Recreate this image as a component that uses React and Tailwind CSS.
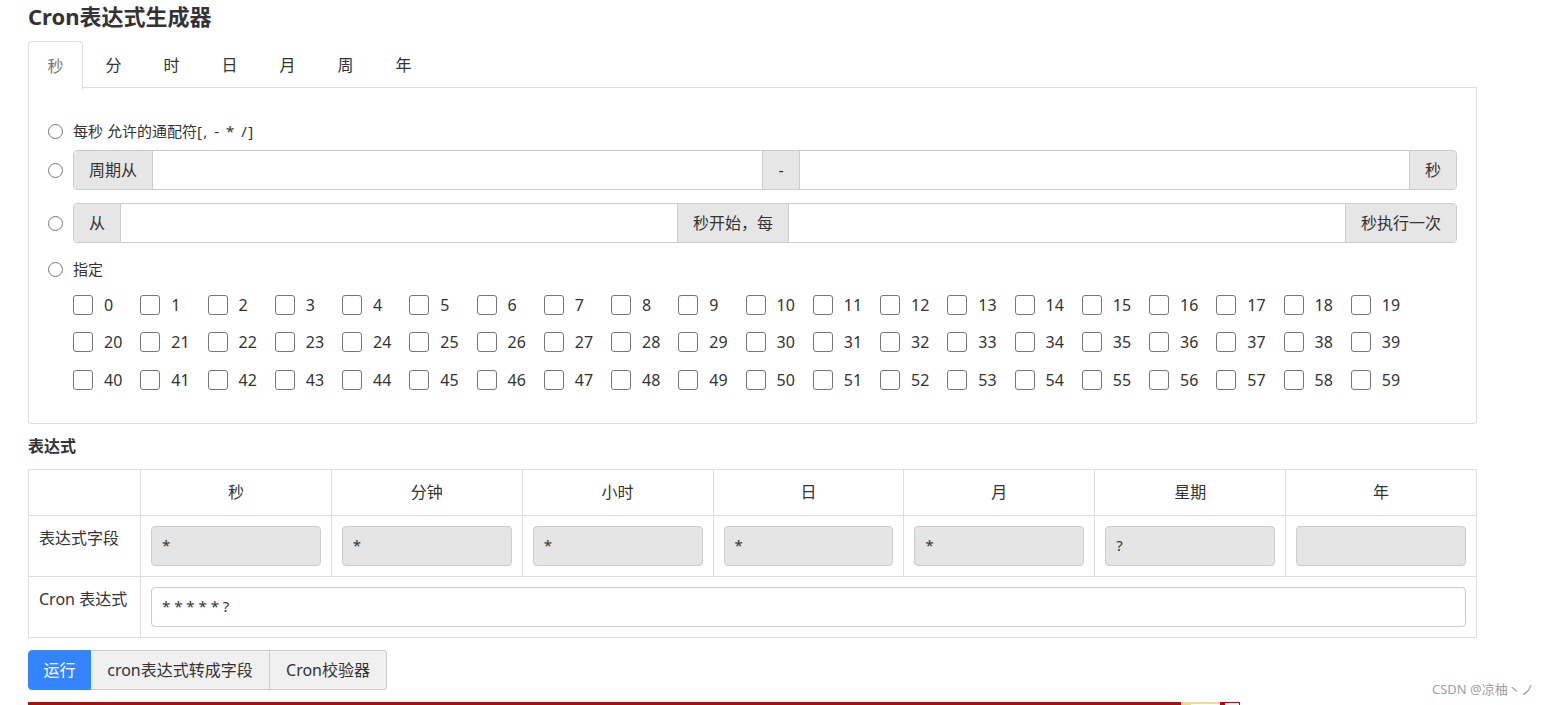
import React from "react";

const font = { fontFamily: '"Noto Sans", "Noto Sans CJK SC", sans-serif' };

const tabs = ["秒", "分", "时", "日", "月", "周", "年"];
const fields = [
  { label: "秒", value: "*" },
  { label: "分钟", value: "*" },
  { label: "小时", value: "*" },
  { label: "日", value: "*" },
  { label: "月", value: "*" },
  { label: "星期", value: "?" },
  { label: "年", value: "" },
];

const Radio = () => (
  <span className="mr-[10px] inline-block h-[15px] w-[15px] shrink-0 rounded-full border border-[#767676] bg-white" />
);

const Addon = ({ children, className = "" }) => (
  <span
    className={`flex h-full items-center border-[#ccc] bg-[#e6e6e6] px-[15px] text-base text-[#333] ${className}`}
  >
    {children}
  </span>
);

const Field = () => <span className="h-full flex-1 bg-white" />;

const App = () => {
  return (
    <div className="relative min-h-screen overflow-hidden bg-white text-[#333]" style={font}>
      <div className="ml-[28px] w-[1449px]">
        <h1 className="h-[32px] text-[22px] leading-[32px] font-bold">Cron表达式生成器</h1>

        {/* tabs */}
        <div className="mt-[9px] flex h-[47px] border-b border-[#ddd]">
          {tabs.map((t, i) => (
            <div
              key={t}
              className={`mr-[3px] flex h-[47px] w-[55px] items-center justify-center text-base ${
                i === 0
                  ? "-mb-px h-[48px] rounded-t-[4px] border border-b-0 border-[#ddd] bg-white text-[#777]"
                  : "text-[#333]"
              }`}
            >
              {t}
            </div>
          ))}
        </div>

        {/* panel */}
        <div className="rounded-b-[4px] border border-t-0 border-[#ddd] pt-[33px] pr-[19px] pb-[24px] pl-[19px]">
          <div className="flex h-[20px] items-center text-[15px]">
            <Radio />
            <span>
              每秒 允许的通配符<span className="tracking-[1.5px]">[, - * /]</span>
            </span>
          </div>

          <div className="mt-[9px] flex h-[40px] items-center">
            <Radio />
            <div className="flex h-[40px] flex-1 overflow-hidden rounded-[4px] border border-[#ccc]">
              <Addon className="border-r">周期从</Addon>
              <Field />
              <Addon className="border-x">-</Addon>
              <Field />
              <Addon className="border-l">秒</Addon>
            </div>
          </div>

          <div className="mt-[13px] flex h-[40px] items-center">
            <Radio />
            <div className="flex h-[40px] flex-1 overflow-hidden rounded-[4px] border border-[#ccc]">
              <Addon className="border-r">从</Addon>
              <Field />
              <Addon className="border-x">秒开始，每</Addon>
              <Field />
              <Addon className="border-l">秒执行一次</Addon>
            </div>
          </div>

          <div className="mt-[16px] flex h-[20px] items-center text-[15px]">
            <Radio />
            <span>指定</span>
          </div>

          <div className="mt-[7px] ml-[25px] grid grid-cols-[repeat(20,67.26px)]">
            {Array.from({ length: 60 }, (_, n) => (
              <label key={n} className="flex h-[37.5px] items-center text-base">
                <span className="h-[20px] w-[20px] rounded-[3px] border border-[#767676] bg-white" />
                <span className="ml-[11px]">{n}</span>
              </label>
            ))}
          </div>
        </div>

        <h2 className="mt-[10px] h-[24px] text-base leading-[24px] font-bold">表达式</h2>

        {/* expression table */}
        <table className="mt-[11px] w-full table-fixed border-collapse border border-[#ddd] text-base">
          <colgroup>
            <col className="w-[112px]" />
            {fields.map((f) => (
              <col key={f.label} />
            ))}
          </colgroup>
          <thead>
            <tr className="h-[46px]">
              <th className="border border-[#ddd]" />
              {fields.map((f) => (
                <th key={f.label} className="border border-[#ddd] text-center font-normal">
                  {f.label}
                </th>
              ))}
            </tr>
          </thead>
          <tbody>
            <tr className="h-[61px]">
              <td className="border border-[#ddd] px-[10px] pt-[8px] align-top leading-[28px]">表达式字段</td>
              {fields.map((f) => (
                <td key={f.label} className="border border-[#ddd] py-[10px] pr-[10px] pl-[10px]">
                  <div className="flex h-[40px] items-center rounded-[4px] border border-[#ccc] bg-[#e5e5e5] px-[10px] text-[15px]">
                    {f.value}
                  </div>
                </td>
              ))}
            </tr>
            <tr className="h-[61px]">
              <td className="border border-[#ddd] px-[10px] pt-[8px] align-top leading-[28px]">Cron 表达式</td>
              <td colSpan={7} className="border border-[#ddd] p-[10px]">
                <div className="flex h-[40px] items-center rounded-[4px] border border-[#ccc] bg-white px-[10px] text-[15px]">
                  * * * * * ?
                </div>
              </td>
            </tr>
          </tbody>
        </table>

        {/* buttons */}
        <div className="mt-[12px] flex h-[40px] text-base">
          <button className="h-full w-[63px] rounded-l-[4px] border border-[#3385ff] bg-[#3385ff] text-white">
            运行
          </button>
          <button className="h-full w-[179px] border border-l-0 border-[#ccc] bg-[#f0f0f0] text-[#333]">
            cron表达式转成字段
          </button>
          <button className="h-full w-[117px] rounded-r-[4px] border border-l-0 border-[#ccc] bg-[#f0f0f0] text-[#333]">
            Cron校验器
          </button>
        </div>

        {/* banner top edge */}
        <div className="mt-[12px] flex h-[8px] w-[1212px]">
          <div className="h-full flex-1 bg-[#b00c0c]" />
          <div className="h-full w-[10px] bg-[#f3d98a]" />
          <div className="h-full w-[29px] border-t-2 border-[#f3d98a] bg-white" />
          <div className="h-full w-[5px] bg-[#b00c0c]" />
          <div className="h-full w-[15px] border-t border-r border-[#b00c0c] bg-white" />
        </div>
      </div>

      <span className="absolute top-[680px] left-[1432px] text-[13px] text-[#a0a0a0]">CSDN @凉柚丶ノ</span>
    </div>
  );
};

export default App;
